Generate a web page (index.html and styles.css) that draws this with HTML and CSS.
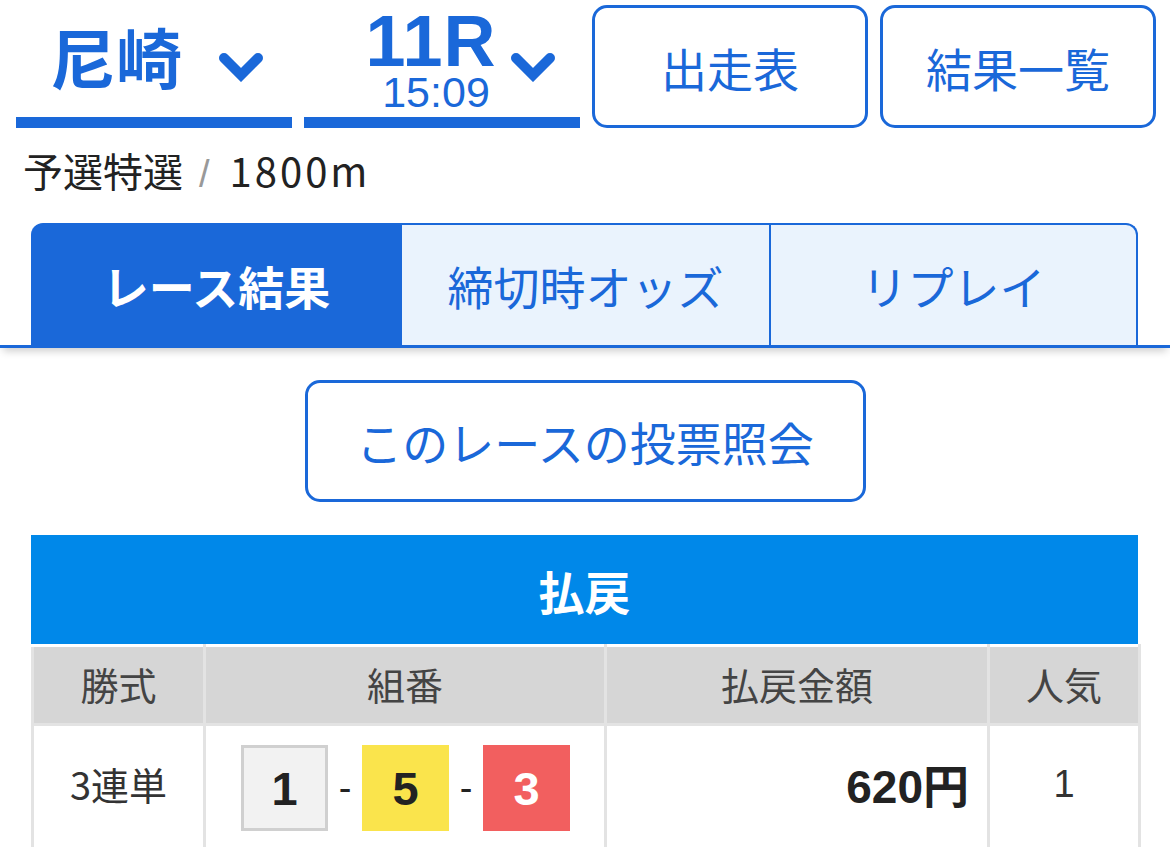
FILE: index.html
```html
<!DOCTYPE html>
<html lang="ja">
<head>
<meta charset="utf-8">
<title>尼崎 11R</title>
<link rel="stylesheet" href="styles.css">
</head>
<body>
<header class="top">
  <div class="sel sel-venue">
    <span class="venue">尼崎</span>
    <svg class="chev" viewBox="0 0 46 30" width="46" height="30"><path d="M6 6 L23 23 L40 6" fill="none" stroke="#1a68d9" stroke-width="10" stroke-linecap="round" stroke-linejoin="miter"/></svg>
  </div>
  <div class="sel sel-race">
    <div class="race-stack">
      <span class="race-no">11R</span>
      <span class="race-time">15:09</span>
    </div>
    <svg class="chev chev2" viewBox="0 0 46 30" width="46" height="30"><path d="M6 6 L23 23 L40 6" fill="none" stroke="#1a68d9" stroke-width="10" stroke-linecap="round" stroke-linejoin="miter"/></svg>
  </div>
  <a class="btn-top">出走表</a>
  <a class="btn-top">結果一覧</a>
</header>

<div class="subtitle">予選特選<span class="slash">/</span><span class="dist">1800m</span></div>

<nav class="tabs">
  <div class="tab tab-active">レース結果</div>
  <div class="tab tab-mid">締切時オッズ</div>
  <div class="tab tab-last">リプレイ</div>
</nav>

<div class="vote-wrap">
  <a class="btn-vote">このレースの投票照会</a>
</div>

<section class="payout">
  <h2 class="payout-title">払戻</h2>
  <table class="payout-table">
    <colgroup>
      <col class="c1"><col class="c2"><col class="c3"><col class="c4">
    </colgroup>
    <thead>
      <tr><th>勝式</th><th>組番</th><th>払戻金額</th><th>人気</th></tr>
    </thead>
    <tbody>
      <tr>
        <td class="kind">3連単</td>
        <td class="combo">
          <div class="combo-row">
            <span class="num n1">1</span><span class="dash">-</span><span class="num n5">5</span><span class="dash">-</span><span class="num n3">3</span>
          </div>
        </td>
        <td class="amount">620円</td>
        <td class="pop">1</td>
      </tr>
    </tbody>
  </table>
</section>
</body>
</html>
```

FILE: styles.css
```css
* { box-sizing: border-box; }
html, body { margin: 0; padding: 0; background: #fff; }
body {
  font-family: "Noto Sans CJK JP", "Liberation Sans", sans-serif;
  color: #222;
  width: 1170px;
  overflow: hidden;
}

.top {
  display: flex;
  gap: 12px;
  padding: 5px 14px 0 16px;
}
.sel {
  width: 276px;
  height: 123px;
  border-bottom: 11px solid #1a68d9;
  display: flex;
  align-items: center;
}
.sel-venue { padding-left: 34px; }
.venue {
  font-size: 66px;
  line-height: 66px;
  font-weight: 700;
  color: #1a68d9;
  margin-bottom: 12px;
}
.chev { display: block; margin-top: 12px; }
.sel-venue .chev { margin-left: 36px; }
.sel-race { padding-left: 56px; }
.race-stack {
  display: flex;
  flex-direction: column;
  align-items: center;
  width: 142px;
  color: #1a68d9;
  font-family: "Liberation Sans", sans-serif;
}
.race-no { font-size: 72px; line-height: 54px; font-weight: 700; letter-spacing: 1px; }
.race-time { font-size: 43px; line-height: 34px; margin-left: 10px; margin-top: 7px; }
.chev2 { margin-left: 8px; }

.btn-top {
  width: 276px;
  height: 123px;
  border: 3px solid #1a68d9;
  border-radius: 15px;
  display: flex;
  align-items: center;
  justify-content: center;
  color: #1a68d9;
  font-size: 46px;
}

.subtitle {
  margin-top: 14px;
  padding-left: 23px;
  font-size: 40px;
  line-height: 56px;
  color: #222;
}
.slash { color: #999; margin: 0 20px 0 16px; font-family: "Liberation Sans", sans-serif; font-size: 38px; }
.dist { letter-spacing: 3px; }

.tabs {
  margin-top: 21px;
  display: flex;
  padding: 0 32px 0 31px;
  border-bottom: 3px solid #1a68d9;
  box-shadow: 0 6px 8px -3px rgba(0,0,0,0.2);
}
.tab {
  height: 122px;
  display: flex;
  align-items: center;
  justify-content: center;
  background: #eaf3fd;
  color: #1a68d9;
  font-size: 46px;
  border-top: 2px solid #1a68d9;
  border-right: 2px solid #1a68d9;
}
.tab-active {
  width: 371px;
  background: #1a68d9;
  color: #fff;
  font-weight: 700;
  border-top-left-radius: 12px;
  border-right: none;
}
.tab-mid { width: 369px; }
.tab-last { flex: 1; border-top-right-radius: 12px; }

.vote-wrap {
  display: flex;
  justify-content: center;
  margin-top: 32px;
}
.btn-vote {
  width: 561px;
  height: 122px;
  border: 3px solid #1a68d9;
  border-radius: 15px;
  display: flex;
  align-items: center;
  justify-content: center;
  color: #1a68d9;
  font-size: 46px;
}

.payout { margin: 33px 32px 0 31px; }
.payout-title {
  margin: 0;
  height: 109px;
  background: #0088e9;
  color: #fff;
  font-size: 46px;
  font-weight: 700;
  display: flex;
  align-items: center;
  justify-content: center;
}
.payout-table {
  width: 100%;
  border-collapse: collapse;
  table-layout: fixed;
  border: 3px solid #e3e3e3;
  border-top: none;
}
.c1 { width: 172px; }
.c2 { width: 401px; }
.c3 { width: 383px; }
.c4 { width: 151px; }
.payout-table th, .payout-table td {
  border: 3px solid #e3e3e3;
  padding: 0;
}
.payout-table th {
  height: 79px;
  background: #d6d6d6;
  color: #444;
  font-weight: 400;
  font-size: 38px;
  border-top: 3px solid #fff;
  padding-bottom: 4px;
}
.payout-table td {
  height: 124px;
  font-size: 38px;
  color: #333;
  text-align: center;
  vertical-align: top;
  padding-top: 19px;
}
.payout-table td.kind { padding-top: 30px; }
.payout-table td.pop { padding-top: 37px; }
.combo-row {
  display: flex;
  align-items: center;
  padding-left: 35px;
}
.num {
  width: 87px;
  height: 86px;
  display: flex;
  align-items: center;
  justify-content: center;
  font-family: "Liberation Sans", sans-serif;
  font-weight: 700;
  font-size: 47px;
  color: #222;
}
.n1 { background: #f2f2f2; border: 3px solid #d0d0d0; }
.n5 { background: #fae44c; }
.n3 { background: #f25f5f; color: #fff; }
.dash {
  width: 34px;
  text-align: center;
  font-family: "Liberation Sans", sans-serif;
  font-size: 38px;
  color: #222;
}
.payout-table td.amount {
  text-align: right;
  padding-right: 18px;
  padding-top: 24px;
  font-family: "Liberation Sans", "Noto Sans CJK JP", sans-serif;
  font-weight: 700;
  font-size: 46px;
  color: #222;
}
.pop { font-family: "Liberation Sans", sans-serif; }
```
